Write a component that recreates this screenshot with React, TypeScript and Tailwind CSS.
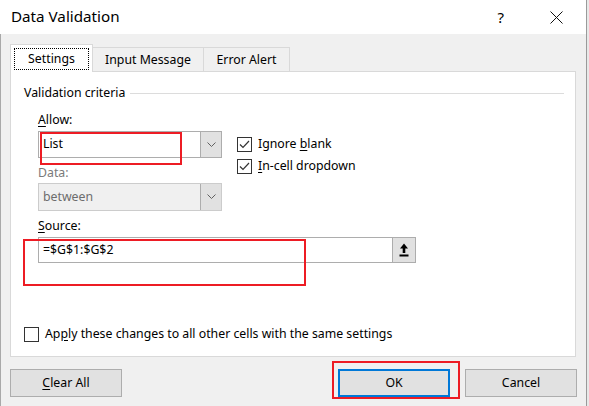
import React from "react";

const font = { fontFamily: '"Noto Sans", "Open Sans", sans-serif' };

function Chevron() {
  return (
    <svg width="9" height="6" viewBox="0 0 9 6" className="text-[#606060]">
      <path d="M0.5 0.5 L4.5 4.5 L8.5 0.5" fill="none" stroke="currentColor" strokeWidth="1" />
    </svg>
  );
}

function Check({ checked }: { checked: boolean }) {
  return (
    <span className="flex h-[15px] w-[15px] shrink-0 items-center justify-center border border-[#333] bg-white">
      {checked && (
        <svg width="13" height="13" viewBox="0 0 13 13">
          <path d="M2 6.5 L5 9.5 L11 3" fill="none" stroke="#333" strokeWidth="1.2" />
        </svg>
      )}
    </span>
  );
}

function Select({ value, disabled }: { value: string; disabled?: boolean }) {
  return (
    <div
      className={`flex w-[184px] border ${
        disabled ? "h-[28px] border-[#cccccc] bg-[#f0f0f0]" : "h-[27px] border-[#adadad] bg-white"
      }`}
    >
      <div className={`flex flex-1 items-center pl-[4px] ${disabled ? "text-[#6d6d6d]" : "text-black"}`}>
        {value}
      </div>
      <div className="flex w-[21px] items-center justify-center border-l border-[#adadad] bg-[#e1e1e1]">
        <Chevron />
      </div>
    </div>
  );
}

export default function App() {
  return (
    <div className="relative flex h-[406px] w-[589px] overflow-hidden bg-[#e8e8e8] text-black" style={font}>
      <div className="flex w-[587px] flex-col border-r border-[#9a9a9a]">
        {/* title bar */}
        <div className="flex h-[34px] shrink-0 items-center bg-white">
          <span className="ml-[11px] text-[15.2px] leading-none">Data Validation</span>
          <span className="ml-auto mr-[46px] text-[15px] leading-none">?</span>
          <svg width="13" height="13" viewBox="0 0 13 13" className="mr-[23px]">
            <path d="M0.5 0.5 L12.5 12.5 M12.5 0.5 L0.5 12.5" stroke="#111" strokeWidth="1" />
          </svg>
        </div>

        {/* body */}
        <div className="flex flex-1 flex-col border-l border-[#a9a9a9] bg-[#f0f0f0] pl-[9px] pt-[10px] text-[12.3px]">
          {/* tabs */}
          <div className="flex h-[28px] items-start">
            <div className="relative z-10 flex h-[28px] w-[83px] border border-b-0 border-[#d9d9d9] bg-white p-[3px] pb-[2px]">
              <span className="flex flex-1 items-center justify-center border border-dotted border-black pt-px">Settings</span>
            </div>
            <div className="-ml-px mt-[3px] flex h-[25px] w-[112px] items-center justify-center border border-[#d9d9d9] bg-[#f0f0f0] pt-px">
              Input Message
            </div>
            <div className="-ml-px mt-[3px] flex h-[25px] w-[87px] items-center justify-center border border-[#d9d9d9] bg-[#f0f0f0] pt-px">
              Error Alert
            </div>
          </div>

          {/* panel */}
          <div className="-mt-px flex h-[286px] w-[566px] flex-col border border-[#d9d9d9] bg-white">
            <div className="mt-[13px] flex h-[16px] items-center pl-[13px] pr-[11px]">
              <span>Validation criteria</span>
              <div className="ml-[5px] h-px flex-1 bg-[#dcdcdc]" />
            </div>

            <div className="mt-[11px] flex pl-[27px]">
              <div className="flex flex-col">
                <div className="flex h-[16px] items-center">
                  <span className="underline underline-offset-2">A</span>llow:
                </div>
                <div className="mt-[3px]">
                  <Select value="List" />
                </div>
                <div className="mt-[7px] flex h-[16px] items-center text-[#7a7a7a]">Data:</div>
                <div className="mt-[2px]">
                  <Select value="between" disabled />
                </div>
              </div>
              <div className="ml-[15px] flex flex-col gap-[7px] pt-[25px]">
                <label className="flex h-[15px] items-center gap-[6px]">
                  <Check checked />
                  <span>
                    Ignore <span className="underline underline-offset-2">b</span>lank
                  </span>
                </label>
                <label className="flex h-[15px] items-center gap-[6px]">
                  <Check checked />
                  <span>
                    <span className="underline underline-offset-2">I</span>n-cell dropdown
                  </span>
                </label>
              </div>
            </div>

            <div className="mt-[7px] flex h-[16px] items-center pl-[27px]">
              <span className="underline underline-offset-2">S</span>ource:
            </div>
            <div className="ml-[27px] mt-[3px] flex h-[26px] w-[378px] border border-[#adadad]">
              <div className="flex flex-1 items-center pl-[4px]">=$G$1:$G$2</div>
              <div className="flex w-[23px] items-center justify-center border-l border-[#adadad] bg-[#e1e1e1]">
                <svg width="10" height="14" viewBox="0 0 10 14">
                  <path d="M5 0.5 L9 5.5 L6.3 5.5 L6.3 10 L3.7 10 L3.7 5.5 L1 5.5 Z" fill="#000" />
                  <rect x="0.5" y="11.5" width="9" height="2" fill="#000" />
                </svg>
              </div>
            </div>

            <label className="ml-[13px] mt-[64px] flex h-[15px] items-center gap-[6px]">
              <Check checked={false} />
              <span>
                Ap<span className="underline underline-offset-2">p</span>ly these changes to all other cells with the same settings
              </span>
            </label>
          </div>

          {/* buttons */}
          <div className="mt-[12px] flex h-[28px]">
            <button className="flex w-[112px] items-center justify-center border border-[#adadad] bg-[#e1e1e1]">
              <span>
                <span className="underline underline-offset-2">C</span>lear All
              </span>
            </button>
            <button className="ml-[216px] flex w-[112px] items-center justify-center border-2 border-[#0078d7] bg-[#e1e1e1]">
              OK
            </button>
            <button className="ml-[15px] flex w-[112px] items-center justify-center border border-[#adadad] bg-[#e1e1e1]">
              Cancel
            </button>
          </div>
        </div>
      </div>

      {/* red annotation boxes */}
      <div className="pointer-events-none absolute left-[40px] top-[132px] h-[33px] w-[142px] border-2 border-[#ed1c24]" />
      <div className="pointer-events-none absolute left-[23px] top-[239px] h-[47px] w-[283px] border-2 border-[#ed1c24]" />
      <div className="pointer-events-none absolute left-[332px] top-[361px] h-[38px] w-[128px] border-2 border-[#ed1c24]" />
    </div>
  );
}
